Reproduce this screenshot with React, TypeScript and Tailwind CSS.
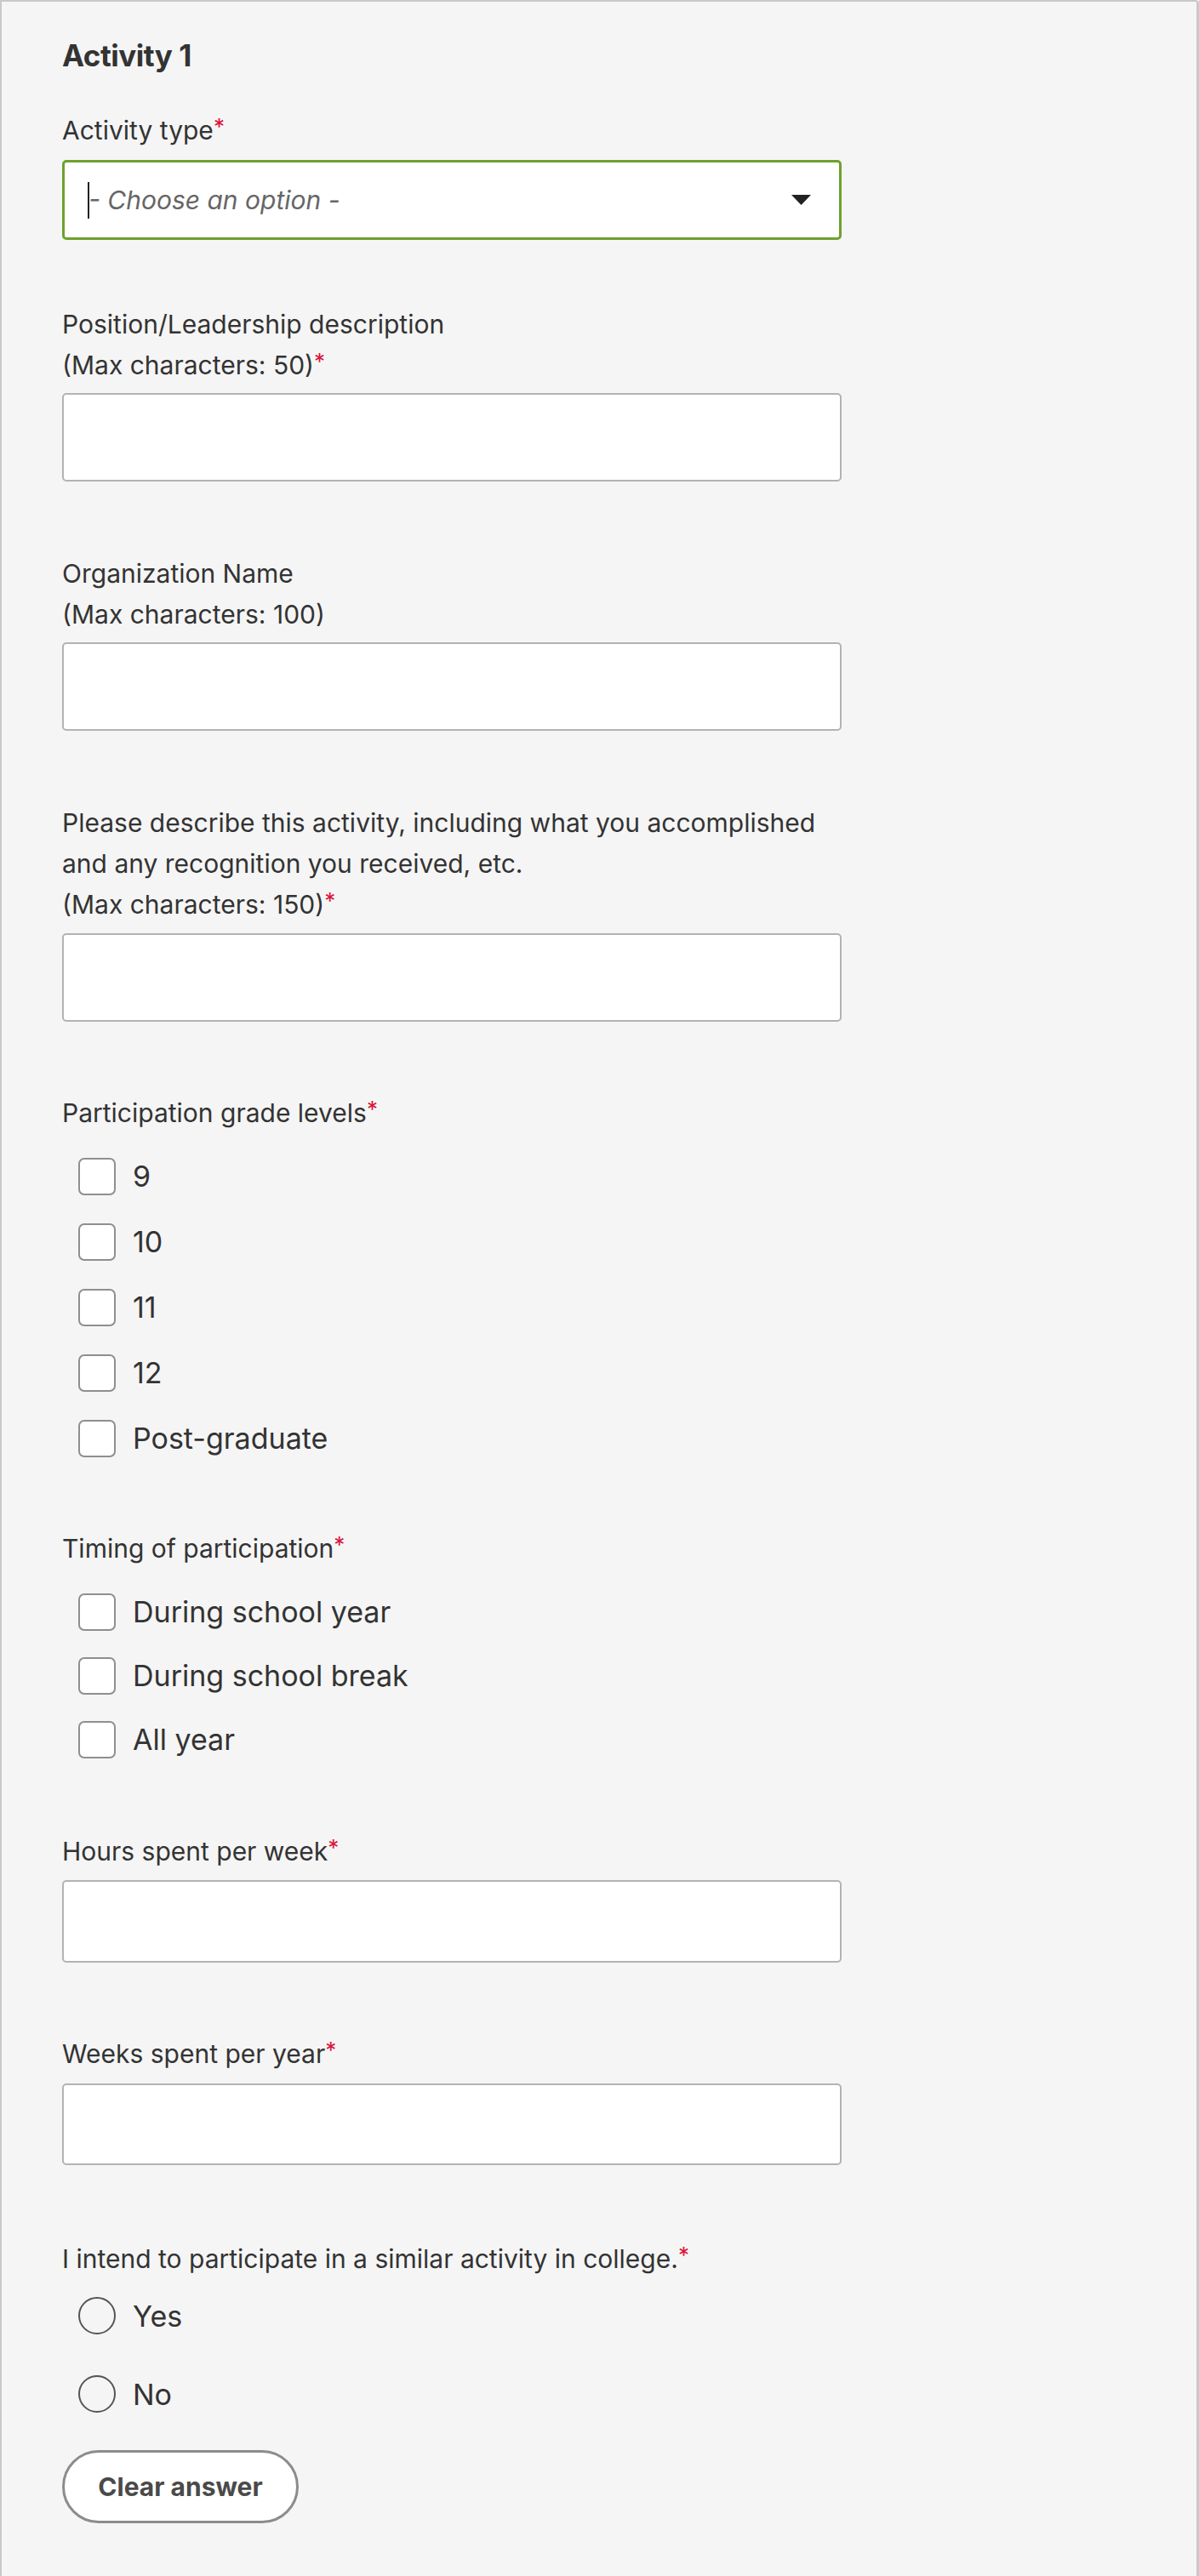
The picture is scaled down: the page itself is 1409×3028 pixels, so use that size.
import React from 'react'

// Red asterisk for required fields
const Req = () => <span className="text-[#d9143a] text-[26px] align-top leading-[40px]">*</span>

const Label = ({ children, className = '' }: { children: React.ReactNode; className?: string }) => (
  <div className={`text-[30px] leading-[48px] text-[#333333] whitespace-nowrap ${className}`}>{children}</div>
)

const TextBox = ({ className = '' }: { className?: string }) => (
  <input
    type="text"
    className={`block w-[916px] rounded-[5px] border-2 border-[#b3b3b3] bg-white px-6 text-[30px] outline-none ${className}`}
  />
)

const CheckRow = ({ label, rowClass }: { label: string; rowClass: string }) => (
  <label className={`flex items-center pl-[19px] ${rowClass}`}>
    <span className="w-[44px] h-[44px] rounded-[7px] border-2 border-[#8f8f8f] bg-white shrink-0" />
    <span className="ml-[20px] text-[34px] text-[#333333]">{label}</span>
  </label>
)

const RadioRow = ({ label }: { label: string }) => (
  <label className="flex items-center h-[80px] pl-[19px]">
    <span className="w-[44px] h-[44px] rounded-full border-2 border-[#555555] shrink-0" />
    <span className="ml-[20px] text-[34px] text-[#333333]">{label}</span>
  </label>
)

const App = () => {
  const grades = ['9', '10', '11', '12', 'Post-graduate']
  const timing = ['During school year', 'During school break', 'All year']

  return (
    <div className="min-h-screen bg-white">
      <div className="min-h-[3028px] bg-[#f5f5f5] border-t-2 border-l-2 border-r-[3px] border-[#c9c9c9] rounded-tr-[4px] pl-[71px] pt-[39px] font-['Inter',sans-serif] text-[#333333]">
        <h2 className="text-[35px] leading-[48px] font-bold tracking-[-0.5px]">Activity 1</h2>

        {/* Activity type */}
        <Label className="mt-[40px]">
          Activity type<Req />
        </Label>
        <div className="mt-[11px] w-[916px] h-[94px] rounded-[5px] border-[3px] border-[#6ea12c] bg-white flex items-center pl-[27px] pr-[33px]">
          <span className="inline-block w-[2px] h-[43px] bg-[#222222]" />
          <span className="-ml-[1px] text-[30px] italic text-[#666666]">- Choose an option -</span>
          <svg className="ml-auto" width="23" height="12" viewBox="0 0 23 12">
            <path d="M0 0 L23 0 L11.5 12 Z" fill="#222222" />
          </svg>
        </div>

        {/* Position */}
        <Label className="mt-[75px]">
          Position/Leadership description
          <br />
          (Max characters: 50)<Req />
        </Label>
        <TextBox className="mt-[9px] h-[104px]" />

        {/* Organization */}
        <Label className="mt-[84px]">
          Organization Name
          <br />
          (Max characters: 100)
        </Label>
        <TextBox className="mt-[9px] h-[104px]" />

        {/* Description */}
        <Label className="mt-[84px]">
          Please describe this activity, including what you accomplished
          <br />
          and any recognition you received, etc.
          <br />
          (Max characters: 150)<Req />
        </Label>
        <TextBox className="mt-[10px] h-[104px]" />

        {/* Grade levels */}
        <Label className="mt-[83px]">
          Participation grade levels<Req />
        </Label>
        <div className="mt-[12px]">
          {grades.map(g => (
            <CheckRow key={g} label={g} rowClass="h-[77px]" />
          ))}
        </div>

        {/* Timing */}
        <Label className="mt-[67px]">
          Timing of participation<Req />
        </Label>
        <div className="mt-[13px]">
          {timing.map(t => (
            <CheckRow key={t} label={t} rowClass="h-[75px]" />
          ))}
        </div>

        {/* Hours */}
        <Label className="mt-[70px]">
          Hours spent per week<Req />
        </Label>
        <TextBox className="mt-[10px] h-[97px]" />

        {/* Weeks */}
        <Label className="mt-[83px]">
          Weeks spent per year<Req />
        </Label>
        <TextBox className="mt-[11px] h-[96px]" />

        {/* College intent */}
        <Label className="mt-[86px]">
          I intend to participate in a similar activity in college.<Req />
        </Label>
        <div className="mt-[3px] flex flex-col gap-[12px]">
          <RadioRow label="Yes" />
          <RadioRow label="No" />
        </div>

        <button
          type="button"
          className="mt-[26px] w-[278px] h-[86px] rounded-full border-[3px] border-[#8c8c8c] bg-white text-[30px] font-bold text-[#4a4a4a]"
        >
          Clear answer
        </button>
      </div>
    </div>
  )
}

export default App
